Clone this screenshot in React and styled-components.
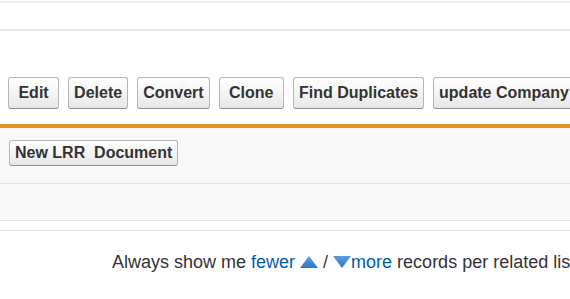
import React from "react";
import styled, { createGlobalStyle } from "styled-components";

const Global = createGlobalStyle`
  html, body {
    margin: 0;
    padding: 0;
    background: #fff;
    overflow: hidden;
  }
  body {
    font-family: "Liberation Sans", Arial, sans-serif;
    color: #333;
  }
`;

const Page = styled.div`
  width: 570px;
  height: 299px;
  overflow: hidden;
  white-space: nowrap;
`;

const TopStrip = styled.div`
  margin-top: 1px;
  height: 26px;
  border-top: 2px solid #ededed;
  border-bottom: 2px solid #ebebeb;
`;

const ButtonRow = styled.div`
  display: flex;
  gap: 9px;
  margin-top: 46px;
  padding-left: 8px;
  width: max-content;
`;

const Btn = styled.button`
  height: ${(p) => (p.$small ? 26 : 32)}px;
  padding: 0 5px;
  border: 1px solid #b5b5b5;
  border-bottom-color: #8f8f8f;
  border-radius: 3px;
  background: linear-gradient(#ffffff, #f3f3f3 55%, #e6e6e6);
  color: #333;
  font-family: "Liberation Sans", Arial, sans-serif;
  font-weight: bold;
  font-size: 16px;
  white-space: pre;
  cursor: pointer;
  flex: none;
`;

const OrangeBar = styled.div`
  margin-top: 15px;
  height: 4px;
  background: #e39321;
`;

const Panel = styled.div`
  background: #f8f8f8;
  border-bottom: 1px solid #e0e3e5;
`;

const PanelTop = styled.div`
  padding: 12px 0 0 9px;
  height: 56px;
  box-sizing: border-box;
  border-bottom: 1px solid #e0e3e5;
  display: flex;
  align-items: flex-start;
`;

const PanelBody = styled.div`
  height: 36px;
`;

const Rule = styled.div`
  margin-top: 9px;
  height: 1px;
  background: #e6e6e6;
`;

const Footer = styled.div`
  margin-top: 21px;
  padding-left: 112px;
  font-size: 18px;
  line-height: 20px;
  color: #333;
`;

const Link = styled.a`
  color: #015ba7;
  text-decoration: none;
`;

const Arrow = styled.svg`
  width: 18px;
  height: 14px;
  vertical-align: -1px;
`;

function Tri({ down }) {
  return (
    <Arrow viewBox="0 0 18 14">
      <defs>
        <linearGradient id={down ? "gd" : "gu"} x1="0" y1="0" x2="0" y2="1">
          <stop offset="0" stopColor="#5b9be0" />
          <stop offset="1" stopColor="#2f77c9" />
        </linearGradient>
      </defs>
      {down ? (
        <polygon points="0,1 18,1 9,13" fill="url(#gd)" />
      ) : (
        <polygon points="9,1 18,13 0,13" fill="url(#gu)" />
      )}
    </Arrow>
  );
}

export default function App() {
  const buttons = [" Edit ", "Delete", "Convert", " Clone ", "Find Duplicates", "update Company"];
  return (
    <Page>
      <Global />
      <TopStrip />
      <ButtonRow>
        {buttons.map((b) => (
          <Btn key={b}>{b}</Btn>
        ))}
      </ButtonRow>
      <OrangeBar />
      <Panel>
        <PanelTop>
          <Btn $small>New LRR  Document</Btn>
        </PanelTop>
        <PanelBody />
      </Panel>
      <Rule />
      <Footer>
        Always show me <Link href="#">fewer</Link> <Tri /> / <Tri down />
        <Link href="#">more</Link> records per related list
      </Footer>
    </Page>
  );
}
